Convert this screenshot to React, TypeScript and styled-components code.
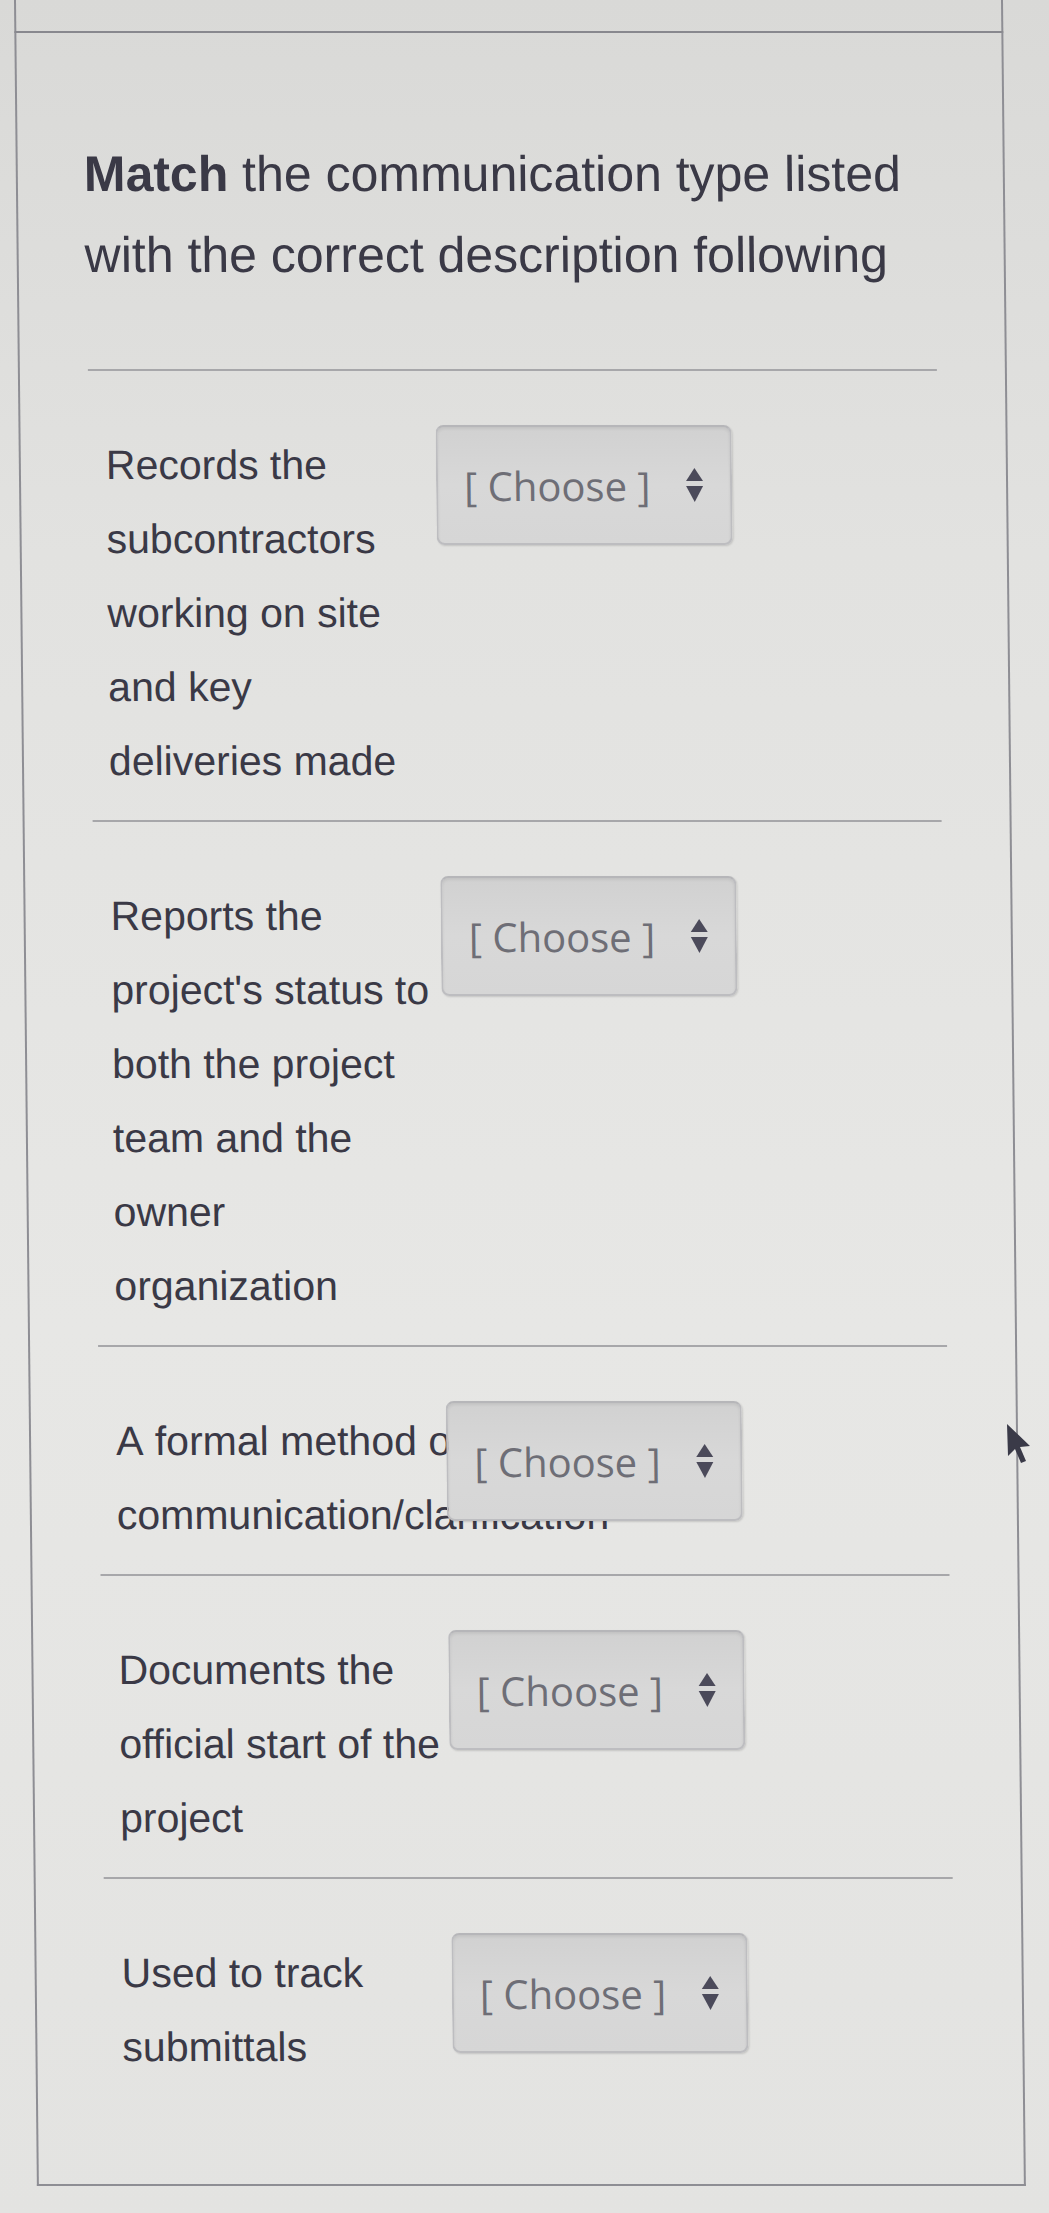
import React from 'react';
import styled, { createGlobalStyle } from 'styled-components';

const GlobalStyle = createGlobalStyle`
  html, body {
    margin: 0;
    padding: 0;
    background: #e2e2e0;
  }
  body {
    font-family: "Liberation Sans", Arial, sans-serif;
    color: #3a3946;
  }
`;

const Page = styled.div`
  position: relative;
  width: 1049px;
  min-height: 2213px;
  padding-left: 14px;
  box-sizing: border-box;
  overflow: hidden;
  background: linear-gradient(180deg, #d9d9d7 0%, #e2e2e0 25%, #e7e7e5 60%, #e3e3e1 100%);
`;

// the photo is taken slightly askew, so the sheet leans a little to the right
const Sheet = styled.div`
  width: 989px;
  transform: skewX(0.6deg);
  transform-origin: 0 0;
`;

const PrevQuestion = styled.div`
  height: 31px;
  border-left: 2px solid #8e8e94;
  border-right: 2px solid #8e8e94;
`;

const Question = styled.section`
  border: 2px solid #8e8e94;
  border-top-color: #88888e;
  padding: 0 68px 78px;
`;

const Prompt = styled.p`
  margin: 101px 0 73px -2px;
  font-size: 50px;
  line-height: 81px;

  strong {
    font-weight: 700;
  }
`;

const Row = styled.div`
  display: flex;
  align-items: flex-start;
  padding: 54px 0 22px 17px;
  border-top: 2px solid #a7a7aa;
`;

const Label = styled.div`
  flex: 0 0 330px;
  min-width: 0;
  padding-top: 3px;
`;

const LabelText = styled.div`
  width: 325px;
  font-size: 41px;
  line-height: 74px;
`;

const Select = styled.div`
  position: relative;
  z-index: 1;
  box-sizing: border-box;
  flex: 0 0 296px;
  height: 120px;
  display: flex;
  align-items: center;
  justify-content: space-between;
  padding: 0 26px 0 26px;
  border: 2px solid #bdbdc0;
  border-top-color: #b6b6b9;
  border-radius: 8px;
  background: linear-gradient(180deg, #d1d1d1 0%, #d8d8d8 50%, #d6d6d6 100%);
  box-shadow: inset 0 2px 3px rgba(0, 0, 0, 0.07), 1px 1px 2px rgba(0, 0, 0, 0.14);
  font-family: "Open Sans", "Liberation Sans", sans-serif;
  font-size: 40px;
  color: #6e6e76;
  cursor: pointer;
`;

const Arrows = styled.svg`
  width: 19px;
  height: 36px;
  fill: #4b4a5a;
`;

const Cursor = styled.svg`
  position: absolute;
  left: 1006px;
  top: 1423px;
  width: 26px;
  height: 42px;
`;

// the third label keeps its first line together, as the reference shows it running under the select
const rows = [
  'Records the subcontractors working on site and key deliveries made',
  "Reports the project's status to both the project team and the owner organization",
  'A\u00a0formal\u00a0method\u00a0of communication/clarification',
  'Documents the official start of the project',
  'Used to track submittals',
];

const ChooseSelect: React.FC = () => (
  <Select role="combobox" aria-expanded={false}>
    <span>[ Choose ]</span>
    <Arrows viewBox="0 0 19 36">
      <polygon points="9.5,1 18,14 1,14" />
      <polygon points="1,19 18,19 9.5,35" />
    </Arrows>
  </Select>
);

export default function App() {
  return (
    <Page>
      <GlobalStyle />
      <Sheet>
        <PrevQuestion />
        <Question>
          <Prompt>
            <strong>Match</strong> the communication type listed with the correct description following
          </Prompt>
          {rows.map((text) => (
            <Row key={text}>
              <Label>
                <LabelText>{text}</LabelText>
              </Label>
              <ChooseSelect />
            </Row>
          ))}
        </Question>
      </Sheet>
      <Cursor viewBox="0 0 26 42">
        <path d="M1 1 L2 33 L9 26 L15 40 L20 38 L14 24 L24 23 Z" fill="#3a3a48" />
      </Cursor>
    </Page>
  );
}
